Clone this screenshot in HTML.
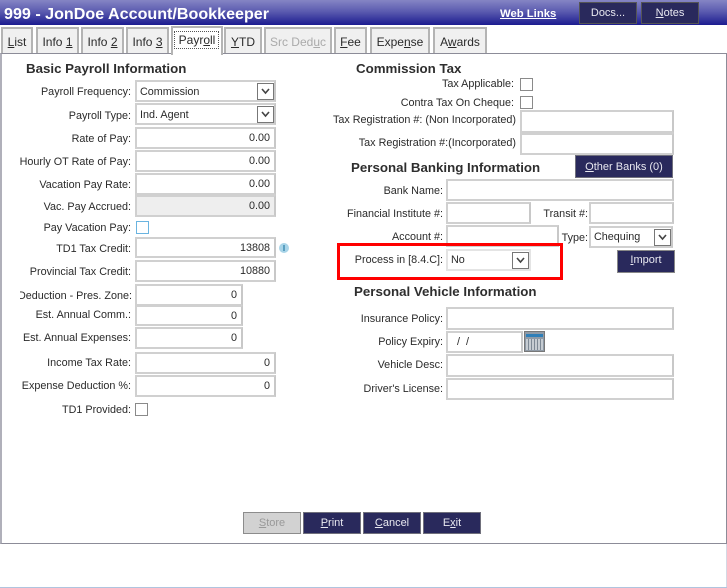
<!DOCTYPE html>
<html><head><meta charset="utf-8"><style>
html,body{margin:0;padding:0;background:#fff}
body{width:727px;height:588px;position:relative;overflow:hidden;font-family:"Liberation Sans",Arial,sans-serif;font-size:10.8px;color:#333}
#r{position:absolute;left:0;top:0;width:727px;height:588px;filter:blur(.32px)}
#r div{position:absolute;box-sizing:border-box}
.l{text-align:right;white-space:nowrap;height:16px;line-height:16px;color:#2a2a2a}
.i{border:2px solid #d0d0d0;background:#fff;text-align:right;padding-right:4px;line-height:19px;color:#2a2a2a;font-size:10.8px;border-right-color:#c8c8c8}
.s{text-align:left;padding:0 0 0 3px}
.a{width:17px;height:17px;border:1px solid #777;background:#fff;top:1px;right:0}
.a svg{display:block;margin:4px 0 0 3px}
.c{width:13px;height:13px;border:1px solid #8a8a8a;background:#fff}
.h{font-weight:bold;font-size:13.3px;color:#2e2e2e;white-space:nowrap;height:18px;line-height:18px}
.t{top:27px;height:26px;background:#f0f0f0;border:2px solid #b4b4b4;border-bottom:0;text-align:center;line-height:27px;font-size:12px;color:#2a2a2a;white-space:nowrap}
.b{background:#29295c;color:#e8e8f0;border:1px solid #70707c;text-align:center;font-size:11px;line-height:21px;white-space:nowrap}
u{text-underline-offset:1px}
</style></head><body><div id="r">
<div style="left:0;top:0;width:727px;height:25px;background:linear-gradient(#8585c4,#5c5cb0 45%,#1c1c90)"></div>
<div style="left:4px;top:4px;height:20px;line-height:20px;color:#fff;font-weight:bold;font-size:16.1px;white-space:nowrap">999 - JonDoe Account/Bookkeeper</div>
<div style="left:500px;top:7px;height:14px;line-height:14px;color:#fff;font-weight:bold;font-size:11.3px;white-space:nowrap"><u>Web Links</u></div>
<div class="b" style="left:579px;top:2px;width:58px;height:22px;border:1px solid #555">Docs...</div>
<div class="b" style="left:641px;top:2px;width:58px;height:22px;border:1px solid #555"><u>N</u>otes</div>

<div style="left:0;top:53px;width:727px;height:491px;border:1px solid #8c8c98;border-left:2px solid #b0b0ba;border-right:1px solid #8c8c98;background:#fff"></div>
<div style="left:726px;top:544px;width:1px;height:44px;background:#d4d8e4"></div>
<div class="t" style="left:1px;width:32px"><u>L</u>ist</div>
<div class="t" style="left:36px;width:43px">Info <u>1</u></div>
<div class="t" style="left:81px;width:43px">Info <u>2</u></div>
<div class="t" style="left:126px;width:43px">Info <u>3</u></div>
<div class="t" style="left:171px;top:26px;width:52px;height:29px;background:#fff;border-bottom:0;line-height:24px">Payr<u>o</u>ll</div>
<div style="left:174px;top:31px;width:45px;height:18px;border:1px dotted #555"></div>
<div class="t" style="left:224px;width:38px"><u>Y</u>TD</div>
<div class="t" style="left:264px;width:68px;color:#aaa">Src Ded<u>u</u>c</div>
<div class="t" style="left:334px;width:33px"><u>F</u>ee</div>
<div class="t" style="left:370px;width:60px">Expe<u>n</u>se</div>
<div class="t" style="left:433px;width:54px">A<u>w</u>ards</div>

<div class="h" style="left:26px;top:60px">Basic Payroll Information</div>
<div class="l" style="right:596px;top:84px">Payroll Frequency:</div>
<div class="i s" style="left:135px;top:80px;width:141px;height:22px;line-height:20px">Commission<div class="a"><svg width="9" height="7"><path d="M1 1l3.5 4L8 1" fill="none" stroke="#444" stroke-width="1.6"/></svg></div></div>
<div class="l" style="right:596px;top:108px">Payroll Type:</div>
<div class="i s" style="left:135px;top:103px;width:141px;height:22px;line-height:21px">Ind. Agent<div class="a"><svg width="9" height="7"><path d="M1 1l3.5 4L8 1" fill="none" stroke="#444" stroke-width="1.6"/></svg></div></div>
<div class="l" style="right:596px;top:131px">Rate of Pay:</div>
<div class="i" style="left:135px;top:127px;width:141px;height:22px">0.00</div>
<div class="l" style="right:596px;top:154px">Hourly OT Rate of Pay:</div>
<div class="i" style="left:135px;top:150px;width:141px;height:22px">0.00</div>
<div class="l" style="right:596px;top:177px">Vacation Pay Rate:</div>
<div class="i" style="left:135px;top:173px;width:141px;height:22px">0.00</div>
<div class="l" style="right:596px;top:199px">Vac. Pay Accrued:</div>
<div class="i" style="left:135px;top:195px;width:141px;height:22px;background:#eee">0.00</div>
<div class="l" style="right:596px;top:220px">Pay Vacation Pay:</div>
<div class="c" style="left:136px;top:221px;border-color:#6ab4e0"></div>
<div class="l" style="right:596px;top:241px">TD1 Tax Credit:</div>
<div class="i" style="left:135px;top:237px;width:141px;height:21px">13808</div>
<div style="left:279px;top:243px;width:10px;height:10px;border-radius:50%;background:#a8d4e8"></div>
<div style="left:283px;top:245px;width:2px;height:6px;background:#5a9fc0"></div>
<div class="l" style="right:596px;top:264px">Provincial Tax Credit:</div>
<div class="i" style="left:135px;top:260px;width:141px;height:22px">10880</div>
<div style="left:20px;top:288px;width:112px;height:16px;overflow:hidden"><div class="l" style="right:0;top:0">Deduction - Pres. Zone:</div></div>
<div class="i" style="left:135px;top:284px;width:108px;height:22px">0</div>
<div class="l" style="right:596px;top:307px">Est. Annual Comm.:</div>
<div class="i" style="left:135px;top:305px;width:108px;height:21px">0</div>
<div class="l" style="right:596px;top:330px">Est. Annual Expenses:</div>
<div class="i" style="left:135px;top:327px;width:108px;height:22px">0</div>
<div class="l" style="right:596px;top:355px">Income Tax Rate:</div>
<div class="i" style="left:135px;top:352px;width:141px;height:22px">0</div>
<div class="l" style="right:596px;top:378px">Expense Deduction %:</div>
<div class="i" style="left:135px;top:375px;width:141px;height:22px">0</div>
<div class="l" style="right:596px;top:402px">TD1 Provided:</div>
<div class="c" style="left:135px;top:403px"></div>

<div class="h" style="left:356px;top:60px">Commission Tax</div>
<div class="l" style="right:213px;top:76px">Tax Applicable:</div>
<div class="c" style="left:520px;top:78px"></div>
<div class="l" style="right:213px;top:95px">Contra Tax On Cheque:</div>
<div class="c" style="left:520px;top:96px"></div>
<div class="l" style="right:211px;top:112px">Tax Registration #: (Non Incorporated)</div>
<div class="i" style="left:520px;top:110px;width:154px;height:23px"></div>
<div class="l" style="right:211px;top:135px">Tax Registration #:(Incorporated)</div>
<div class="i" style="left:520px;top:133px;width:154px;height:22px"></div>
<div class="h" style="left:351px;top:159px">Personal Banking Information</div>
<div class="b" style="left:575px;top:155px;width:98px;height:23px;line-height:22px"><u>O</u>ther Banks (0)</div>
<div class="l" style="right:284px;top:183px">Bank Name:</div>
<div class="i" style="left:446px;top:179px;width:228px;height:22px"></div>
<div class="l" style="right:284px;top:206px">Financial Institute #:</div>
<div class="i" style="left:446px;top:202px;width:85px;height:22px"></div>
<div class="l" style="right:139px;top:206px">Transit #:</div>
<div class="i" style="left:589px;top:202px;width:85px;height:22px"></div>
<div class="l" style="right:284px;top:229px">Account #:</div>
<div class="i" style="left:446px;top:225px;width:113px;height:22px"></div>
<div class="l" style="right:139px;top:230px">Type:</div>
<div class="i s" style="left:589px;top:226px;width:84px;height:22px">Chequing<div class="a"><svg width="9" height="7"><path d="M1 1l3.5 4L8 1" fill="none" stroke="#444" stroke-width="1.6"/></svg></div></div>
<div style="left:337px;top:243px;width:226px;height:37px;border:3px solid #f00"></div>
<div class="l" style="right:284px;top:252px">Process in [8.4.C]:</div>
<div class="i s" style="left:446px;top:249px;width:85px;height:22px;border-color:#e4e4e4">No<div class="a"><svg width="9" height="7"><path d="M1 1l3.5 4L8 1" fill="none" stroke="#444" stroke-width="1.6"/></svg></div></div>
<div class="b" style="left:617px;top:250px;width:58px;height:23px;line-height:19px;border-color:#888"><u>I</u>mport</div>

<div class="h" style="left:354px;top:283px">Personal Vehicle Information</div>
<div class="l" style="right:284px;top:311px">Insurance Policy:</div>
<div class="i" style="left:446px;top:307px;width:228px;height:23px"></div>
<div class="l" style="right:284px;top:334px">Policy Expiry:</div>
<div class="i s" style="left:446px;top:331px;width:77px;height:22px;padding-left:9px">/ &nbsp;/</div>
<div style="left:524px;top:331px;width:21px;height:21px;background:#8f9aa6;border:1px solid #777"></div>
<div style="left:526px;top:334px;width:17px;height:3px;background:#2f7fb8"></div>
<div style="left:526px;top:339px;width:17px;height:11px;background:repeating-linear-gradient(90deg,#c6ccd2 0 2px,#7d8894 2px 3px)"></div>
<div class="l" style="right:284px;top:357px">Vehicle Desc:</div>
<div class="i" style="left:446px;top:354px;width:228px;height:23px"></div>
<div class="l" style="right:284px;top:381px">Driver's License:</div>
<div class="i" style="left:446px;top:378px;width:228px;height:22px"></div>

<div class="b" style="left:243px;top:512px;width:58px;height:22px;background:#d2d2d2;color:#999;border:1px solid #8c8c8c"><u>S</u>tore</div>
<div class="b" style="left:303px;top:512px;width:58px;height:22px"><u>P</u>rint</div>
<div class="b" style="left:363px;top:512px;width:58px;height:22px"><u>C</u>ancel</div>
<div class="b" style="left:423px;top:512px;width:58px;height:22px">E<u>x</u>it</div>
<div style="left:0;top:587px;width:727px;height:1px;background:#b0c4de"></div>
</div></body></html>
